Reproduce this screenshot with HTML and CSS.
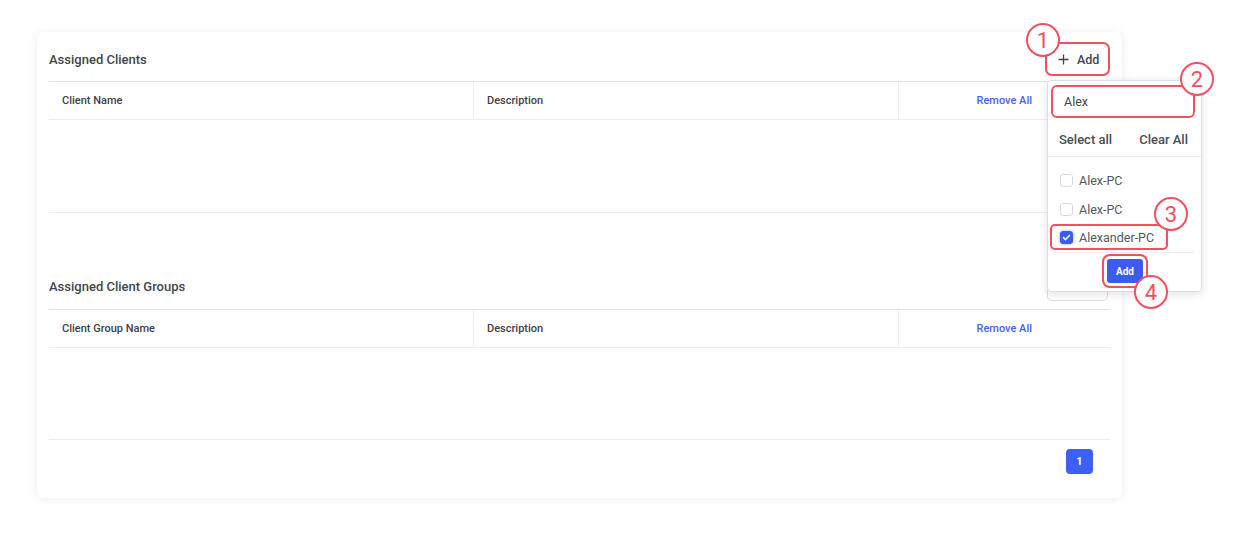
FILE: index.html
```html
<!DOCTYPE html>
<html lang="en">
<head>
    <meta charset="UTF-8">
    <meta name="viewport" content="width=device-width, initial-scale=1.0">
    <title>Assigned Clients</title>
    <link rel="stylesheet" href="styles.css">
</head>
<body>
    <div class="page">
        <div class="card">
            <!-- Assigned clients -->
            <section class="section">
                <div class="section-head">
                    <h2>Assigned Clients</h2>
                    <button class="btn-add marked">
                        <svg width="11" height="11" viewBox="0 0 11 11"><path d="M5.5 0.5v10M0.5 5.5h10" stroke="#444" stroke-width="1.3" fill="none"/></svg>
                        Add
                    </button>
                </div>
                <table class="grid">
                    <thead>
                        <tr>
                            <th class="col-name">Client Name</th>
                            <th class="col-desc">Description</th>
                            <th class="col-act"><a href="#">Remove All</a></th>
                        </tr>
                    </thead>
                    <tbody>
                        <tr class="empty"><td colspan="3"></td></tr>
                    </tbody>
                </table>
            </section>

            <!-- Assigned client groups -->
            <section class="section second">
                <div class="section-head">
                    <h2>Assigned Client Groups</h2>
                    <button class="btn-add">
                        <svg width="11" height="11" viewBox="0 0 11 11"><path d="M5.5 0.5v10M0.5 5.5h10" stroke="#444" stroke-width="1.3" fill="none"/></svg>
                        Add
                    </button>
                </div>
                <table class="grid">
                    <thead>
                        <tr>
                            <th class="col-name">Client Group Name</th>
                            <th class="col-desc">Description</th>
                            <th class="col-act"><a href="#">Remove All</a></th>
                        </tr>
                    </thead>
                    <tbody>
                        <tr class="empty"><td colspan="3"></td></tr>
                    </tbody>
                </table>
                <div class="pager">
                    <button class="page-num">1</button>
                </div>
            </section>

            <!-- client picker dropdown -->
            <div class="dropdown">
                <input class="search" type="text" value="Alex">
                <div class="bulk">
                    <span>Select all</span>
                    <span>Clear All</span>
                </div>
                <ul class="options">
                    <li><span class="check"></span>Alex-PC</li>
                    <li><span class="check"></span>Alex-PC</li>
                    <li class="marked-item"><span class="check on"><svg width="9" height="9" viewBox="0 0 9 9"><path d="M1.5 4.6l2 2 4-4.2" stroke="#fff" stroke-width="1.5" fill="none" stroke-linecap="round" stroke-linejoin="round"/></svg></span>Alexander-PC</li>
                </ul>
                <div class="drop-foot">
                    <button class="btn-primary">Add</button>
                </div>
            </div>
        </div>

        <!-- step markers -->
        <span class="step s1">1</span>
        <span class="step s2">2</span>
        <span class="step s3">3</span>
        <span class="step s4">4</span>
    </div>
</body>
</html>
```

FILE: styles.css
```css
body {
    margin: 0;
    background: #fff;
    font-family: Roboto, "Liberation Sans", Arial, sans-serif;
    color: #3f4148;
}

.page {
    position: relative;
    padding: 32px 0 0 37px;
    height: 506px;
}

.card {
    position: relative;
    width: 1085px;
    box-sizing: border-box;
    padding: 12px 12px 24px 12px;
    background: #fff;
    border-radius: 6px;
    box-shadow: 0 1px 10px rgba(0, 0, 0, 0.08);
}

.section.second {
    margin-top: 58px;
}

.section-head {
    display: flex;
    justify-content: space-between;
    align-items: center;
    height: 30px;
    margin-bottom: 7px;
}

.second .section-head {
    margin-bottom: 8px;
}

h2 {
    margin: 0;
    font-size: 13px;
    font-weight: 500;
    color: #43454b;
}

.btn-add {
    display: flex;
    align-items: center;
    gap: 8px;
    width: 61px;
    height: 30px;
    margin-right: 2px;
    padding: 0 0 0 10px;
    border: 1px solid #dcdfe5;
    border-radius: 5px;
    background: #fff;
    font-family: inherit;
    font-size: 12.5px;
    font-weight: 500;
    color: #43454b;
    box-sizing: border-box;
}

.btn-add.marked {
    border-color: transparent;
    box-shadow: 0 0 0 2px #f0505f;
}

.grid {
    width: 100%;
    border-collapse: collapse;
    table-layout: fixed;
}

.grid th {
    height: 37px;
    padding: 0 13px;
    text-align: left;
    font-size: 11px;
    font-weight: 500;
    color: #3f4148;
    border-top: 1px solid #dde1e8;
    border-bottom: 1px solid #eceef2;
}

.grid th + th {
    border-left: 1px solid #eceef2;
}

.col-name, .col-desc {
    width: 398px;
}

.grid th.col-act {
    text-align: right;
    padding-right: 78px;
}

.col-act a {
    color: #4464f0;
    text-decoration: none;
}

.grid .empty td {
    height: 92px;
    padding: 0;
    border-bottom: 1px solid #eceef2;
}

.second .grid .empty td {
    height: 91px;
}

.pager {
    display: flex;
    justify-content: flex-end;
    margin-top: 9px;
    padding-right: 17px;
}

.page-num {
    width: 27px;
    height: 25px;
    border: none;
    border-radius: 4px;
    background: #3d60f5;
    color: #fff;
    font-family: inherit;
    font-size: 11px;
    font-weight: 700;
}

/* dropdown over the tables */
.dropdown {
    position: absolute;
    left: 1010px;
    top: 48px;
    width: 155px;
    height: 212px;
    box-sizing: border-box;
    padding: 4px 6px 0 3px;
    background: #fff;
    border: 1px solid #dcdfe5;
    border-radius: 4px;
    box-shadow: 0 2px 8px rgba(0, 0, 0, 0.12);
}

.search {
    display: block;
    width: 100%;
    height: 33px;
    box-sizing: border-box;
    padding: 0 11px;
    border: 2px solid #f0505f;
    border-radius: 6px;
    font-family: inherit;
    font-size: 12.5px;
    color: #43454b;
    outline: none;
}

.bulk {
    display: flex;
    justify-content: space-between;
    align-items: center;
    height: 33px;
    margin: 0 -6px 0 -3px;
    padding: 5px 13px 0 11px;
    border-bottom: 1px solid #eceef2;
    font-size: 13px;
    font-weight: 500;
    color: #4a4c52;
}

.options {
    list-style: none;
    margin: 9px 0 0 -1px;
    padding: 0;
}

.options li {
    display: flex;
    align-items: center;
    width: fit-content;
    height: 29px;
    padding: 0 14px 0 10px;
    font-size: 12.5px;
    color: #55575d;
}

.options li.marked-item {
    height: 26px;
    border-radius: 5px;
    box-shadow: inset 0 0 0 2px #f0505f;
}

.check {
    display: inline-flex;
    align-items: center;
    justify-content: center;
    width: 13px;
    height: 13px;
    margin-right: 6px;
    box-sizing: border-box;
    border: 1px solid #d6d9df;
    border-radius: 3px;
}

.check.on {
    background: #3d5af1;
    border-color: #3d5af1;
    box-shadow: 0 0 3px rgba(61, 90, 241, 0.6);
}

.drop-foot {
    display: flex;
    justify-content: center;
    margin: 2px 1px 0 5px;
    padding-top: 6px;
    border-top: 1px solid #eceef2;
}

.btn-primary {
    width: 36px;
    height: 24px;
    border: none;
    border-radius: 3px;
    background: #3d5af1;
    color: #fff;
    font-family: inherit;
    font-size: 10px;
    font-weight: 700;
    box-shadow: 0 0 0 3px #fff, 0 0 0 5px #f0505f;
}

/* numbered step markers */
.step {
    position: absolute;
    width: 34px;
    height: 34px;
    box-sizing: border-box;
    border: 2px solid #f0505f;
    border-radius: 50%;
    background: #fff;
    display: flex;
    align-items: center;
    justify-content: center;
    font-size: 22px;
    font-weight: 400;
    color: #f0505f;
}

.s1 { left: 1026px; top: 23px; }
.s2 { left: 1180px; top: 62px; }
.s3 { left: 1154px; top: 197px; }
.s4 { left: 1134px; top: 275px; }
```
